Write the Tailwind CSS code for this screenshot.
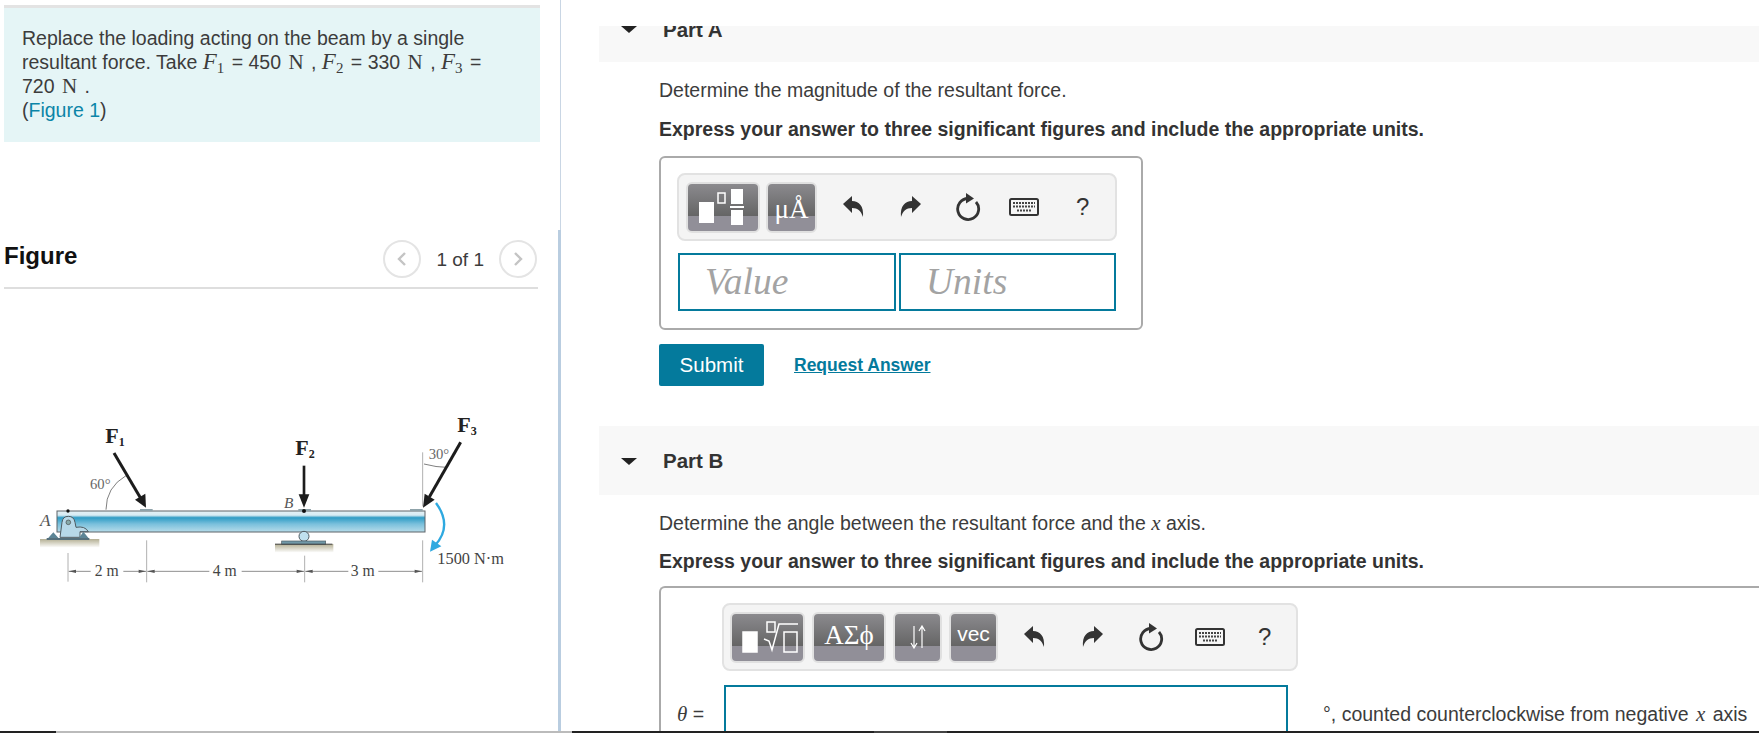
<!DOCTYPE html>
<html lang="en">
<head>
<meta charset="UTF-8">
<title>Part A</title>
<script src="https://cdn.jsdelivr.net/npm/@tailwindcss/browser@4"></script>
</head>
<body class="bg-white">
<div class="relative flex h-[733px] w-[1759px] overflow-hidden font-['Liberation_Sans',Arial,sans-serif] text-[19.5px] text-[#3c3c3c]">

  <!-- left column -->
  <div class="w-[558px] shrink-0 pl-[4px] pt-[5px]">
    <div class="h-[137px] w-[536px] border-t-[3px] border-[#e3e3e3] bg-[#e5f5f6] pl-[18px] pt-[18px] leading-[24px]">
      Replace the loading acting on the beam by a single<br>
      resultant force. Take <span class="font-['Liberation_Serif'] italic text-[23px] leading-none">F</span><sub class="mr-[2px] font-['Liberation_Serif'] text-[15px] leading-none">1</sub> = 450 <span class="mx-[2px] font-['Liberation_Serif'] text-[21px] leading-none">N</span> , <span class="font-['Liberation_Serif'] italic text-[23px] leading-none">F</span><sub class="mr-[2px] font-['Liberation_Serif'] text-[15px] leading-none">2</sub> = 330 <span class="mx-[2px] font-['Liberation_Serif'] text-[21px] leading-none">N</span> , <span class="font-['Liberation_Serif'] italic text-[23px] leading-none">F</span><sub class="mr-[2px] font-['Liberation_Serif'] text-[15px] leading-none">3</sub> =<br>
      720 <span class="mx-[2px] font-['Liberation_Serif'] text-[21px] leading-none">N</span> .<br>
      (<a href="#" class="text-[#0b85a8]">Figure 1</a>)
    </div>
    <div class="mt-[95px] flex h-[52px] w-[534px] items-center justify-between border-b-2 border-[#dedede] pb-[6px]">
      <span class="mb-[6px] text-[24px] font-bold leading-none text-[#111]">Figure</span>
      <div class="flex items-center gap-[15px] pr-px">
        <span class="flex h-[38px] w-[38px] items-center justify-center rounded-full border-2 border-[#e4e4e4]">
          <svg width="12" height="16" viewBox="0 0 12 16" fill="none" stroke="#c4c4c4" stroke-width="2.4"><path d="M9 2 3 8l6 6"/></svg>
        </span>
        <span class="text-[19px] leading-none">1 of 1</span>
        <span class="flex h-[38px] w-[38px] items-center justify-center rounded-full border-2 border-[#e4e4e4]">
          <svg width="12" height="16" viewBox="0 0 12 16" fill="none" stroke="#c4c4c4" stroke-width="2.4"><path d="M3 2l6 6-6 6"/></svg>
        </span>
      </div>
    </div>

    <!-- beam figure -->
    <svg class="ml-[16px] mt-[120px] block" width="500" height="180" viewBox="0 0 1500 540" font-family="Liberation Serif">
      <defs>
        <linearGradient id="beam" x1="0" y1="0" x2="0" y2="1">
          <stop offset="0" stop-color="#e4f1f6"/>
          <stop offset=".2" stop-color="#d6ebf3"/>
          <stop offset=".32" stop-color="#2f9cc5"/>
          <stop offset=".62" stop-color="#7ac0dc"/>
          <stop offset="1" stop-color="#b6dcea"/>
        </linearGradient>
        <linearGradient id="ground" x1="0" y1="0" x2="0" y2="1">
          <stop offset="0" stop-color="#b3ae92"/>
          <stop offset="1" stop-color="#fff"/>
        </linearGradient>
        <filter id="soft"><feGaussianBlur stdDeviation="1.4"/></filter>
      </defs>
      <g filter="url(#soft)">
        <!-- ground -->
        <rect x="60" y="390" width="178" height="26" fill="url(#ground)"/>
        <rect x="765" y="405" width="175" height="26" fill="url(#ground)"/>
        <!-- beam -->
        <rect x="111" y="306" width="1104" height="63" fill="url(#beam)" stroke="#5c6468" stroke-width="3"/>
        <rect x="360" y="300" width="38" height="6" fill="#8fa3aa"/>
        <rect x="835" y="300" width="38" height="6" fill="#8fa3aa"/>
        <rect x="1170" y="300" width="38" height="6" fill="#8fa3aa"/>
        <!-- pin support -->
        <path d="M120 385 L126 340 Q128 322 145 322 Q162 322 165 340 L168 355 Q195 350 205 368 L180 368 L180 385 Z" fill="#b7d8e8" stroke="#4e5a60" stroke-width="3"/>
        <circle cx="145" cy="340" r="7" fill="#8aa" stroke="#444" stroke-width="2"/>
        <path d="M82 390 L100 370 L118 390 Z M175 390 L190 368 L208 390 Z" fill="#5d8596"/>
        <rect x="80" y="387" width="128" height="6" fill="#56707c"/>
        <circle cx="144" cy="306" r="5" fill="#111"/>
        <!-- roller -->
        <circle cx="852" cy="382" r="15" fill="#bfe0ee" stroke="#4e5a60" stroke-width="3"/>
        <rect x="785" y="396" width="132" height="10" fill="#6f98a8" stroke="#4e5a60" stroke-width="2"/>
        <rect x="765" y="404" width="172" height="3" fill="#444"/>
        <circle cx="852" cy="306" r="6" fill="#111"/>
        <!-- extension lines -->
        <path d="M144 432V518M380 394V520M854 440V520M1208 130V292M1208 394V520" stroke="#b0b0b0" stroke-width="3" fill="none"/>
        <!-- dimension lines -->
        <path d="M146 487H212M310 487H378M382 487H568M665 487H852M856 487H985M1075 487H1206" stroke="#777" stroke-width="2.5" fill="none"/>
        <path d="M146 487l22-5v10zM378 487l-22-5v10zM382 487l22-5v10zM852 487l-22-5v10zM856 487l22-5v10zM1206 487l-22-5v10z" fill="#555"/>
        <!-- angle arcs -->
        <path d="M258 302 Q258 235 318 200" fill="none" stroke="#666" stroke-width="2.5"/>
        <path d="M1212 165 Q1250 175 1280 175" fill="none" stroke="#666" stroke-width="2.5"/>
        <!-- forces -->
        <path d="M282 132 L362 268" stroke="#1b1b1b" stroke-width="9" fill="none"/>
        <path d="M378 296 L345 272 L376 254 Z" fill="#1b1b1b"/>
        <path d="M852 170 V262" stroke="#1b1b1b" stroke-width="8" fill="none"/>
        <path d="M852 296 L836 256 H868 Z" fill="#1b1b1b"/>
        <path d="M1322 100 L1228 264" stroke="#1b1b1b" stroke-width="9" fill="none"/>
        <path d="M1209 296 L1214 254 L1244 272 Z" fill="#1b1b1b"/>
        <!-- moment -->
        <path d="M1248 282 Q1298 350 1246 408" fill="none" stroke="#2fa9e0" stroke-width="7"/>
        <path d="M1230 428 L1236 392 L1264 412 Z" fill="#2fa9e0"/>
      </g>
      <g fill="#333">
        <text x="256" y="103" font-size="66" font-weight="700" fill="#222">F<tspan font-size="36" dy="8">1</tspan></text>
        <text x="826" y="138" font-size="66" font-weight="700" fill="#222">F<tspan font-size="36" dy="8">2</tspan></text>
        <text x="1312" y="70" font-size="66" font-weight="700" fill="#222">F<tspan font-size="36" dy="8">3</tspan></text>
        <text x="210" y="240" font-size="44" fill="#666">60°</text>
        <text x="1226" y="150" font-size="44" fill="#666">30°</text>
        <text x="60" y="350" font-size="52" font-style="italic" fill="#555">A</text>
        <text x="792" y="298" font-size="46" font-style="italic" fill="#555">B</text>
        <text x="224" y="502" font-size="47" fill="#444">2 m</text>
        <text x="578" y="502" font-size="47" fill="#444">4 m</text>
        <text x="992" y="502" font-size="47" fill="#444">3 m</text>
        <text x="1252" y="466" font-size="49" fill="#444">1500 N·m</text>
      </g>
    </svg>
  </div>

  <!-- divider -->
  <div class="flex w-[3px] shrink-0 flex-col items-end">
    <div class="h-[230px] w-px bg-[#c9d6e4]"></div>
    <div class="w-[3px] flex-1 bg-[#b9cde0]"></div>
  </div>

  <!-- right column -->
  <div class="min-w-0 flex-1 pt-[26px]">
    <section>
      <div class="ml-[38px] flex h-[36px] overflow-hidden bg-[#f8f8f8] pl-[22px]">
        <svg class="shrink-0" width="16" height="8" viewBox="0 0 16 8"><path d="M0 0H16L8 7Z" fill="#222"/></svg>
        <span class="ml-[26px] -mt-[8px] text-[20.5px] font-bold leading-[24px] text-[#333]">Part A</span>
      </div>
      <div class="pl-[98px]">
        <p class="mt-[17px] leading-[22px]">Determine the magnitude of the resultant force.</p>
        <p class="mt-[17px] font-bold leading-[22px] text-[#333]">Express your answer to three significant figures and include the appropriate units.</p>
        <div class="mt-[16px] h-[174px] w-[484px] rounded-[6px] border-2 border-[#aaa] pl-[16px] pt-[15px]">
          <div class="flex h-[68px] w-[440px] items-center gap-[6px] rounded-[8px] border-2 border-[#e2e2e2] bg-[#f4f4f4] pl-[7px]">
            <div class="flex h-[51px] w-[74px] items-center justify-center rounded-[6px] border-2 border-[#e0e0e0] bg-[linear-gradient(#8b8a8e,#656565_68%,#918f98_68%)]">
              <svg width="70" height="47" viewBox="0 0 70 47" fill="#fff"><rect x="11" y="18" width="15" height="21"/><rect x="30" y="9" width="7" height="10" fill="none" stroke="#fff" stroke-width="1.5"/><rect x="43" y="5" width="12" height="15"/><rect x="42" y="22" width="14" height="2"/><rect x="43" y="26" width="12" height="15"/></svg>
            </div>
            <div class="flex h-[51px] w-[51px] items-end justify-center rounded-[6px] border-2 border-[#e0e0e0] bg-[linear-gradient(#8b8a8e,#656565_68%,#918f98_68%)] pb-[8px] font-['Liberation_Serif'] text-[27px] leading-none text-white">μÅ</div>
            <div class="flex items-center">
              <svg class="ml-[19px]" width="22" height="24" viewBox="0 0 22 24" fill="#333"><path d="M1 9 10 1v5c7 0 12 5 11 16-2-6-5-9-11-9v5z"/></svg>
              <svg class="ml-[36px]" width="22" height="24" viewBox="0 0 22 24" fill="#333"><path d="M21 9 12 1v5C5 6 0 11 1 22c2-6 5-9 11-9v5z"/></svg>
              <svg class="ml-[33px]" width="26" height="28" viewBox="0 0 26 28" fill="none"><path d="M21 9A10.5 10.5 0 1 1 13 5.5" stroke="#333" stroke-width="2.8"/><path d="M11 0l8 5.5-8 5z" fill="#333"/></svg>
              <svg class="ml-[28px]" width="30" height="18" viewBox="0 0 30 18"><rect x="1" y="1" width="28" height="16" rx="1.5" fill="#f6f6f6" stroke="#333" stroke-width="2"/><path d="M4 5h22M4 8.5h22M8 12.5h14" stroke="#444" stroke-width="2" stroke-dasharray="2 1"/></svg>
              <span class="ml-[37px] text-[24px] leading-none text-[#333]">?</span>
            </div>
          </div>
          <div class="ml-px mt-[12px] flex gap-[3px]">
            <div class="flex h-[58px] w-[218px] items-center border-2 border-[#047a9c] pl-[25px] font-['Liberation_Serif'] text-[37.5px] italic text-[#a3a3a3]">Value</div>
            <div class="flex h-[58px] w-[217px] items-center border-2 border-[#047a9c] pl-[25px] font-['Liberation_Serif'] text-[37.5px] italic text-[#a3a3a3]">Units</div>
          </div>
        </div>
        <div class="mt-[14px] flex items-center">
          <button class="h-[42px] w-[105px] rounded-[2px] bg-[#047a9c] text-[20.5px] text-white">Submit</button>
          <a href="#" class="ml-[30px] text-[17.5px] font-bold text-[#047a9c] underline">Request Answer</a>
        </div>
      </div>
    </section>

    <section class="mt-[40px]">
      <div class="ml-[38px] flex h-[69px] items-center bg-[#f8f8f8] pl-[22px] pt-[2px]">
        <svg class="shrink-0" width="16" height="8" viewBox="0 0 16 8"><path d="M0 0H16L8 7Z" fill="#222"/></svg>
        <span class="ml-[26px] text-[20.5px] font-bold text-[#333]">Part B</span>
      </div>
      <div class="pl-[98px]">
        <p class="mt-[17px] leading-[22px]">Determine the angle between the resultant force and the <span class="font-['Liberation_Serif'] italic text-[21px] leading-none">x</span> axis.</p>
        <p class="mt-[16px] font-bold leading-[22px] text-[#333]">Express your answer to three significant figures and include the appropriate units.</p>
        <div class="mt-[14px] h-[160px] rounded-tl-[6px] border-t-2 border-l-2 border-[#aaa] pl-[61px] pt-[15px]">
          <div class="flex h-[68px] w-[576px] items-center gap-[7px] rounded-[8px] border-2 border-[#e2e2e2] bg-[#f4f4f4] pl-[6px]">
            <div class="flex h-[51px] w-[75px] items-center justify-center rounded-[6px] border-2 border-[#e0e0e0] bg-[linear-gradient(#8b8a8e,#656565_68%,#918f98_68%)]">
              <svg width="71" height="47" viewBox="0 0 71 47" fill="none" stroke="#fff" stroke-width="1.5"><rect x="11" y="18" width="14" height="20" fill="#fff"/><rect x="35" y="8" width="8" height="10"/><path d="M32 25l5 2 3 9 7-26h19"/><rect x="52" y="18" width="13" height="20"/></svg>
            </div>
            <div class="flex h-[51px] w-[74px] items-start justify-center rounded-[6px] border-2 border-[#e0e0e0] bg-[linear-gradient(#8b8a8e,#656565_68%,#918f98_68%)] pt-[8px] font-['Liberation_Serif'] text-[27px] leading-none text-white">ΑΣϕ</div>
            <div class="flex h-[51px] w-[49px] items-start justify-center rounded-[6px] border-2 border-[#e0e0e0] bg-[linear-gradient(#8b8a8e,#656565_68%,#918f98_68%)] pt-[11px]">
              <svg width="20" height="24" viewBox="0 0 20 24" fill="none" stroke="#fff" stroke-width="1.2"><path d="M6 1V23M3 18l3 5 3-5M14 23V1M11 6l3-5 3 5"/></svg>
            </div>
            <div class="flex h-[51px] w-[49px] items-start justify-center rounded-[6px] border-2 border-[#e0e0e0] bg-[linear-gradient(#8b8a8e,#656565_68%,#918f98_68%)] pt-[9px] text-[21px] leading-none text-white">vec</div>
            <div class="flex items-center">
              <svg class="ml-[18px]" width="22" height="24" viewBox="0 0 22 24" fill="#333"><path d="M1 9 10 1v5c7 0 12 5 11 16-2-6-5-9-11-9v5z"/></svg>
              <svg class="ml-[37px]" width="22" height="24" viewBox="0 0 22 24" fill="#333"><path d="M21 9 12 1v5C5 6 0 11 1 22c2-6 5-9 11-9v5z"/></svg>
              <svg class="ml-[34px]" width="26" height="28" viewBox="0 0 26 28" fill="none"><path d="M21 9A10.5 10.5 0 1 1 13 5.5" stroke="#333" stroke-width="2.8"/><path d="M11 0l8 5.5-8 5z" fill="#333"/></svg>
              <svg class="ml-[31px]" width="30" height="18" viewBox="0 0 30 18"><rect x="1" y="1" width="28" height="16" rx="1.5" fill="#f6f6f6" stroke="#333" stroke-width="2"/><path d="M4 5h22M4 8.5h22M8 12.5h14" stroke="#444" stroke-width="2" stroke-dasharray="2 1"/></svg>
              <span class="ml-[33px] text-[24px] leading-none text-[#333]">?</span>
            </div>
          </div>
          <div class="-ml-[45px] mt-[14px] flex items-start">
            <span class="mt-[18px] w-[47px] whitespace-nowrap leading-[22px]"><span class="font-['Liberation_Serif'] italic text-[21px] leading-none">θ</span> =</span>
            <div class="h-[60px] w-[564px] border-2 border-[#047a9c]"></div>
            <span class="ml-[35px] mt-[18px] whitespace-nowrap leading-[22px]">°, counted counterclockwise from negative <span class="mx-[2px] font-['Liberation_Serif'] italic text-[21px] leading-none">x</span> axis</span>
          </div>
        </div>
      </div>
    </section>
  </div>

  <!-- window edge strip -->
  <div class="absolute bottom-0 left-0 flex h-[2px] w-full bg-[#222]">
    <div class="ml-[56px] w-[516px] bg-[#bbb]"></div>
    <div class="ml-[302px] w-[73px] bg-[#444]"></div>
  </div>
</div>
</body>
</html>
